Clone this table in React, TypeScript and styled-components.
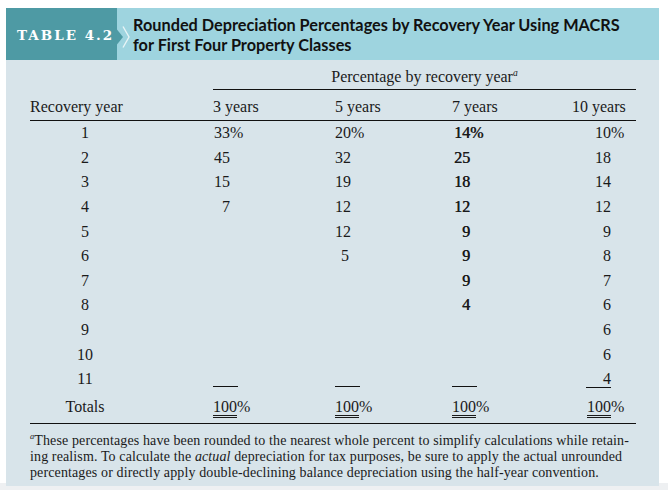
import styled, { createGlobalStyle } from "styled-components";

const GlobalStyle = createGlobalStyle`
  html, body {
    margin: 0;
    padding: 0;
    background: #ffffff;
  }
  body {
    font-family: "Liberation Serif", "Times New Roman", serif;
    color: #1a1a1a;
  }
`;

const Page = styled.div`
  width: 668px;
  height: 490px;
  padding-top: 8px;
  box-sizing: border-box;
  background: linear-gradient(to bottom, #ffffff 0, #ffffff 483px, #eef0f2 483px);
  overflow: hidden;
`;

const Panel = styled.div`
  margin-left: 6px;
  width: 653px;
  background: #d8e4ea;
`;

const Header = styled.div`
  display: flex;
  height: 52px;
  background: #9ed4df;
`;

const Label = styled.div`
  position: relative;
  width: 111px;
  display: flex;
  align-items: center;
  padding: 2px 0 0 11px;
  box-sizing: border-box;
  background: #4e9aa4;
  color: #ffffff;
  font-family: "DejaVu Serif", serif;
  font-weight: bold;
  font-size: 13.5px;
  letter-spacing: 2px;
`;

const Chevron = styled.svg`
  position: absolute;
  left: 109px;
  top: 17px;
`;

const Title = styled.div`
  padding: 7px 0 0 16px;
  font-family: Lato, "Liberation Sans", sans-serif;
  font-weight: bold;
  font-size: 16.3px;
  line-height: 20px;
  color: #111;
  white-space: nowrap;
`;

const Body = styled.div`
  padding: 0 23px 0 24px;
  font-size: 16px;
`;

const Span = styled.div`
  margin-left: 183px;
  padding: 8px 0 3px;
  line-height: 18px;
  text-align: center;
  border-bottom: 1px solid #111;
`;

const Sup = styled.sup`
  font-style: italic;
  font-size: 0.6em;
  line-height: 0;
`;

const Grid = styled.div`
  display: grid;
  grid-template-columns: 183px 122px 117px 120px 64px;
`;

const HeadRow = styled(Grid)`
  padding: 8px 0 4px;
  line-height: 18px;
  border-bottom: 1px solid #111;
`;

const Row = styled(Grid)`
  height: 24.6px;
  align-items: center;
  line-height: 18px;
`;

const TotalRow = styled(Grid)`
  padding: 6px 0 7px;
  line-height: 18px;
  border-bottom: 1px solid #111;
`;

const Year = styled.div`
  width: 110px;
  text-align: center;
`;

const Val = styled.div<{ $bold?: boolean }>`
  display: flex;
  height: 18px;
  white-space: nowrap;
  text-shadow: ${(p) => (p.$bold ? "0.45px 0 0 #1a1a1a" : "none")};
`;

const Num = styled.span<{ $w: number }>`
  display: inline-flex;
  justify-content: flex-end;
  flex: 0 0 ${(p) => p.$w}px;
`;

const Blank = styled.span`
  display: inline-block;
  width: 25px;
  height: 0;
  margin-top: 16px;
  border-bottom: 1px solid #111;
`;

const Under = styled.span`
  display: inline-block;
  width: 25px;
  text-align: right;
  border-bottom: 1px solid #111;
  line-height: 17px;
`;

const Double = styled.span`
  text-decoration: underline double;
  text-decoration-thickness: 1px;
  text-underline-offset: 3px;
`;

const Note = styled.div`
  padding: 9px 0 5px 0;
  font-size: 14px;
  letter-spacing: 0.12px;
  line-height: 16px;
  white-space: nowrap;
`;

const widths = [17, 14, 18, 39];

const data: (string | null)[][] = [
  ["33%", "20%", "14%", "10%"],
  ["45", "32", "25", "18"],
  ["15", "19", "18", "14"],
  ["7", "12", "12", "12"],
  [null, "12", "9", "9"],
  [null, "5", "9", "8"],
  [null, null, "9", "7"],
  [null, null, "4", "6"],
  [null, null, null, "6"],
  [null, null, null, "6"],
];

function Cell({ v, i }: { v: string | null; i: number }) {
  if (v === null) return <div />;
  const pct = v.endsWith("%");
  return (
    <Val $bold={i === 2}>
      <Num $w={widths[i]}>{pct ? v.slice(0, -1) : v}</Num>
      {pct && "%"}
    </Val>
  );
}

export default function App() {
  return (
    <>
      <GlobalStyle />
      <Page>
        <Panel>
          <Header>
            <Label>
              TABLE 4.2
              <Chevron width="18" height="24" viewBox="0 0 18 24">
                <polygon points="0,2 8,12 0,22" fill="#4e9aa4" />
                <polyline points="8,1.5 14,12 8,22.5" fill="none" stroke="#e8f4f6" strokeWidth="1.4" />
              </Chevron>
            </Label>
            <Title>
              Rounded Depreciation Percentages by Recovery Year Using MACRS
              <br />
              for First Four Property Classes
            </Title>
          </Header>
          <Body>
            <Span>
              Percentage by recovery year<Sup>a</Sup>
            </Span>
            <HeadRow>
              <div>Recovery year</div>
              <div>3 years</div>
              <div>5 years</div>
              <div>7 years</div>
              <div>10 years</div>
            </HeadRow>
            {data.map((r, k) => (
              <Row key={k}>
                <Year>{k + 1}</Year>
                {r.map((v, i) => (
                  <Cell key={i} v={v} i={i} />
                ))}
              </Row>
            ))}
            <Row>
              <Year>11</Year>
              {[0, 1, 2].map((i) => (
                <Val key={i}>
                  <Num $w={widths[i]}>
                    <Blank />
                  </Num>
                </Val>
              ))}
              <Val>
                <Num $w={widths[3]}>
                  <Under>4</Under>
                </Num>
              </Val>
            </Row>
            <TotalRow>
              <Year>Totals</Year>
              {widths.map((w, i) => (
                <Val key={i}>
                  <Num $w={w}>
                    <Double>100</Double>
                  </Num>
                  %
                </Val>
              ))}
            </TotalRow>
            <Note>
              <Sup>a</Sup>These percentages have been rounded to the nearest whole percent to simplify calculations while retain-
              <br />
              ing realism. To calculate the <i>actual</i> depreciation for tax purposes, be sure to apply the actual unrounded
              <br />
              percentages or directly apply double-declining balance depreciation using the half-year convention.
            </Note>
          </Body>
        </Panel>
      </Page>
    </>
  );
}
